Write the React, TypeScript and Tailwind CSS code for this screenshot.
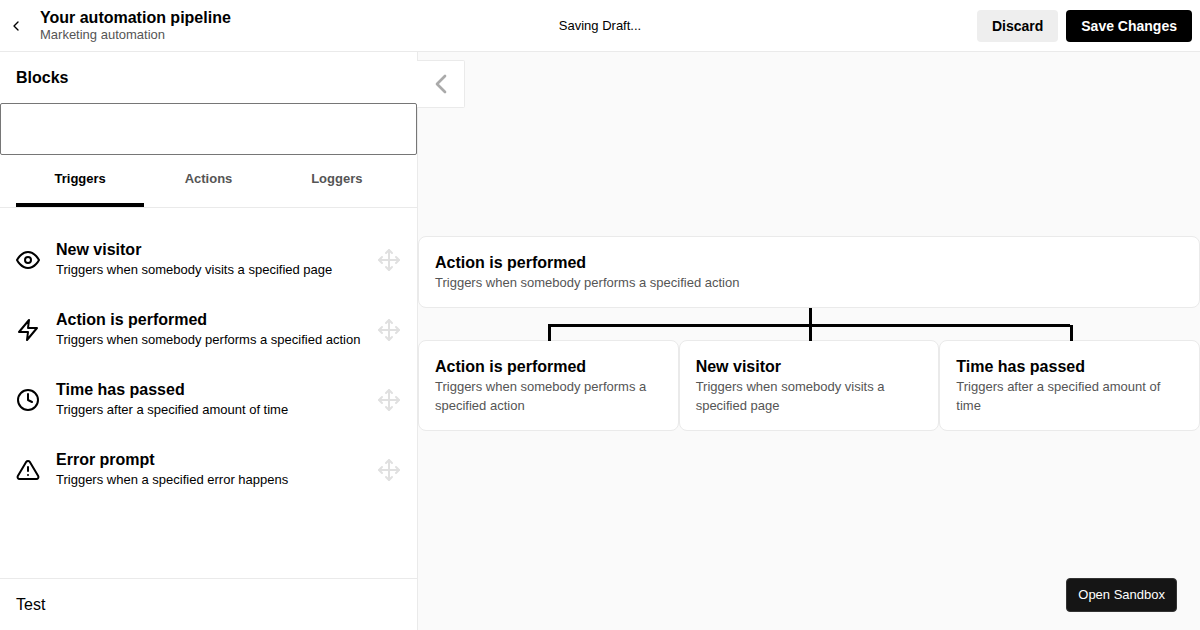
import { useState } from "react";
import type { IconType } from "react-icons";
import {
  FiAlertTriangle,
  FiChevronLeft,
  FiClock,
  FiEye,
  FiMove,
  FiZap,
} from "react-icons/fi";
import clsx from "clsx";

type Block = {
  title: string;
  description: string;
  icon: IconType;
};

const newVisitor: Block = {
  title: "New visitor",
  description: "Triggers when somebody visits a specified page",
  icon: FiEye,
};

const actionPerformed: Block = {
  title: "Action is performed",
  description: "Triggers when somebody performs a specified action",
  icon: FiZap,
};

const timePassed: Block = {
  title: "Time has passed",
  description: "Triggers after a specified amount of time",
  icon: FiClock,
};

const errorPrompt: Block = {
  title: "Error prompt",
  description: "Triggers when a specified error happens",
  icon: FiAlertTriangle,
};

const blocks = [newVisitor, actionPerformed, timePassed, errorPrompt];
const children = [actionPerformed, newVisitor, timePassed];
const tabs = ["Triggers", "Actions", "Loggers"];

export default function App() {
  return (
    <div className="grid min-h-screen grid-cols-[auto_1fr] grid-rows-[auto_1fr] bg-white font-['Liberation_Sans',Arial,sans-serif] text-[13px] text-black">
      <Header />
      <Sidebar />
      <Canvas />
    </div>
  );
}

function Header() {
  return (
    <header className="col-span-2 grid grid-cols-[1fr_auto_1fr] items-center border-b border-[#eaeaea] p-2">
      <div className="flex items-center gap-4">
        <button type="button" aria-label="Back">
          <FiChevronLeft size={16} />
        </button>
        <div>
          <h1 className="text-base leading-[19px] font-bold">Your automation pipeline</h1>
          <p className="leading-4 text-[#555]">Marketing automation</p>
        </div>
      </div>
      <p className="leading-[19px]">Saving Draft...</p>
      <div className="flex justify-end gap-2">
        <button type="button" className="h-8 rounded bg-[#eee] px-[15px] text-sm font-bold">
          Discard
        </button>
        <button type="button" className="h-8 rounded bg-black px-[15px] text-sm font-bold text-white">
          Save Changes
        </button>
      </div>
    </header>
  );
}

function Sidebar() {
  const [activeTab, setActiveTab] = useState(tabs[0]);

  return (
    <aside className="flex min-w-[418px] flex-col border-r border-[#eaeaea]">
      <h2 className="p-4 text-base leading-[19px] font-bold">Blocks</h2>
      <input
        type="search"
        aria-label="Search blocks"
        className="h-[52px] w-full rounded-xs border border-[#767676] px-4"
      />
      <div role="tablist" className="grid grid-cols-3 border-b border-[#eaeaea] px-4">
        {tabs.map((tab) => (
          <button
            key={tab}
            type="button"
            role="tab"
            aria-selected={tab === activeTab}
            onClick={() => setActiveTab(tab)}
            className={clsx(
              "border-b-4 py-4 leading-4 font-bold",
              tab === activeTab ? "border-black text-black" : "border-transparent text-[#555]"
            )}
          >
            {tab}
          </button>
        ))}
      </div>
      <ul className="flex flex-1 flex-col gap-[31px] px-4 pt-8 pb-4">
        {blocks.map(({ title, description, icon: Icon }) => (
          <li key={title} className="flex items-center gap-4">
            <Icon size={24} className="shrink-0" />
            <div className="flex-1">
              <h3 className="text-base leading-5 font-bold">{title}</h3>
              <p className="leading-[19px]">{description}</p>
            </div>
            <FiMove size={24} className="shrink-0 cursor-grab text-[#e0e0e0]" />
          </li>
        ))}
      </ul>
      <footer className="border-t border-[#eaeaea] p-4 text-base leading-[19px]">Test</footer>
    </aside>
  );
}

function Canvas() {
  return (
    <main className="relative flex flex-col justify-center bg-[#fafafa] pb-4">
      {/* Sits over the sidebar border so both look like one panel */}
      <button
        type="button"
        aria-label="Collapse blocks"
        className="absolute top-2 -left-px flex size-12 items-center justify-center rounded-r-xs border border-l-0 border-[#eaeaea] bg-white text-[#aaa]"
      >
        <FiChevronLeft size={32} />
      </button>

      <Card block={actionPerformed} />
      <Connector />
      <div className="grid grid-cols-3">
        {children.map((block) => (
          <Card key={block.title} block={block} />
        ))}
      </div>

      <button
        type="button"
        className="absolute right-[23px] bottom-[18px] h-[34px] rounded border border-[#333] bg-[#151515] px-[11px] text-white"
      >
        Open Sandbox
      </button>
    </main>
  );
}

function Card({ block }: { block: Block }) {
  return (
    <article className="rounded-lg border border-[#eaeaea] bg-white px-4 pt-4 pb-[15px]">
      <h3 className="text-base leading-5 font-bold">{block.title}</h3>
      <p className="leading-[19px] text-[#555]">{block.description}</p>
    </article>
  );
}

/* Lines from the parent card down to the middle of each child column */
function Connector() {
  return (
    <div className="relative z-10 -mb-px h-[33px]" aria-hidden="true">
      <div className="absolute top-0 left-1/2 h-full w-[3px] bg-black" />
      <div className="absolute top-4 left-1/6 h-[3px] w-2/3 bg-black" />
      <div className="absolute top-4 bottom-0 left-1/6 w-[3px] bg-black" />
      <div className="absolute top-[17px] bottom-0 left-5/6 w-[3px] bg-black" />
    </div>
  );
}
